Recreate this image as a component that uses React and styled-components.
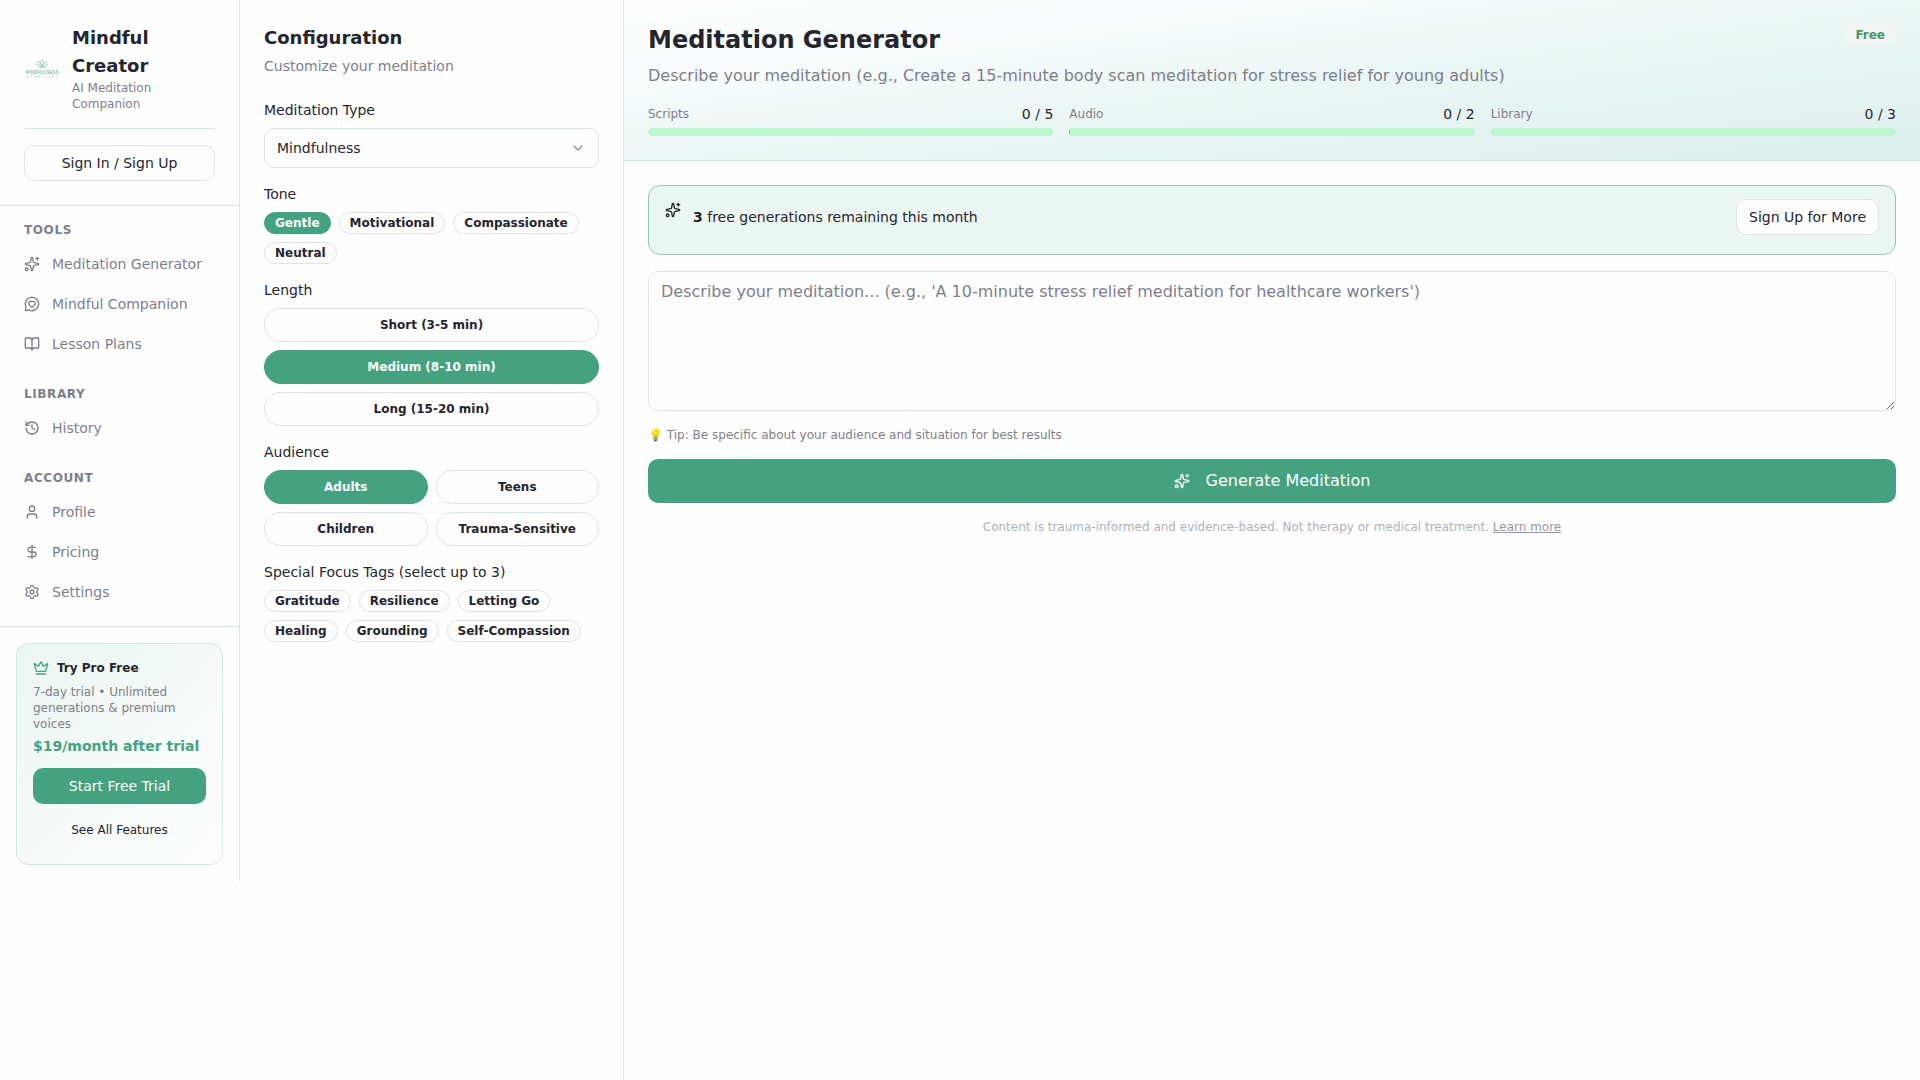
import React, { useState } from 'react'
import styled, { createGlobalStyle, css } from 'styled-components'
import {
  BookOpen,
  ChevronDown,
  Crown,
  DollarSign,
  History,
  MessageCircleHeart,
  Settings,
  Sparkles,
  User,
} from 'lucide-react'

const NAV = [
  {
    title: 'Tools',
    items: [
      { label: 'Meditation Generator', Icon: Sparkles },
      { label: 'Mindful Companion', Icon: MessageCircleHeart },
      { label: 'Lesson Plans', Icon: BookOpen },
    ],
  },
  { title: 'Library', items: [{ label: 'History', Icon: History }] },
  {
    title: 'Account',
    items: [
      { label: 'Profile', Icon: User },
      { label: 'Pricing', Icon: DollarSign },
      { label: 'Settings', Icon: Settings },
    ],
  },
]

const TONES = ['Gentle', 'Motivational', 'Compassionate', 'Neutral']
const LENGTHS = ['Short (3-5 min)', 'Medium (8-10 min)', 'Long (15-20 min)']
const AUDIENCES = ['Adults', 'Teens', 'Children', 'Trauma-Sensitive']
const TAGS = [
  'Gratitude',
  'Resilience',
  'Letting Go',
  'Healing',
  'Grounding',
  'Self-Compassion',
]
const USAGE = [
  { label: 'Scripts', used: 0, limit: 5 },
  { label: 'Audio', used: 0, limit: 2 },
  { label: 'Library', used: 0, limit: 3 },
]

function Logo() {
  return (
    <LogoMark viewBox="0 0 36 36" role="img" aria-label="Mindfulness Exercises">
      <g fill="none" stroke="#7fb398" strokeWidth="0.6">
        <path d="M18 9.500c-2 2.200-2 4.800 0 7c2-2.200 2-4.800 0-7z" />
        <path d="M18 16.500c-3-.4-4.400-2.300-4.300-4.800c2.400.5 3.900 2.200 4.300 4.800z" />
        <path d="M18 16.500c3-.4 4.400-2.300 4.300-4.800c-2.400.5-3.900 2.200-4.300 4.800z" />
        <path d="M12.300 14c.8 2.600 2.900 3.600 5.700 3.600s4.900-1 5.700-3.600" />
      </g>
      <text x="18" y="24" fontSize="4.6" textAnchor="middle" fill="#6aa688">
        MINDFULNESS
      </text>
      <text x="19" y="27.500" fontSize="2.600" textAnchor="middle" fill="#9cc4b0" letterSpacing="2">
        EXERCISES
      </text>
    </LogoMark>
  )
}

function Sidebar() {
  return (
    <SidebarPanel>
      <SidebarHeader>
        <Brand>
          <Logo />
          <div>
            <PanelTitle>Mindful Creator</PanelTitle>
            <SmallText>AI Meditation Companion</SmallText>
          </div>
        </Brand>
        <SignIn>
          <OutlineButton type="button">Sign In / Sign Up</OutlineButton>
        </SignIn>
      </SidebarHeader>
      <Nav>
        {NAV.map(({ title, items }) => (
          <section key={title}>
            <NavTitle>{title}</NavTitle>
            <NavList>
              {items.map(({ label, Icon }) => (
                <li key={label}>
                  <NavLink href="#">
                    <Icon size={16} />
                    {label}
                  </NavLink>
                </li>
              ))}
            </NavList>
          </section>
        ))}
      </Nav>
      <SidebarFooter>
        <TrialCard>
          <TrialTitle>
            <Crown size={16} color="#44a280" />
            Try Pro Free
          </TrialTitle>
          <SmallText>7-day trial • Unlimited generations &amp; premium voices</SmallText>
          <Price>$19/month after trial</Price>
          <PrimaryButton type="button">Start Free Trial</PrimaryButton>
          <GhostButton type="button">See All Features</GhostButton>
        </TrialCard>
      </SidebarFooter>
    </SidebarPanel>
  )
}

function Configuration() {
  const [tone, setTone] = useState('Gentle')
  const [length, setLength] = useState('Medium (8-10 min)')
  const [audience, setAudience] = useState('Adults')
  const [tags, setTags] = useState([])

  const toggleTag = (tag) => {
    if (tags.includes(tag)) {
      setTags(tags.filter((t) => t !== tag))
    } else if (tags.length < 3) {
      setTags([...tags, tag])
    }
  }

  return (
    <ConfigPanel>
      <div>
        <PanelTitle>Configuration</PanelTitle>
        <PanelSubtitle>Customize your meditation</PanelSubtitle>
      </div>
      <Fields>
        <Field>
          <Label as="label" htmlFor="meditation-type">
            Meditation Type
          </Label>
          <SelectBox>
            <Select id="meditation-type" defaultValue="Mindfulness">
              <option>Mindfulness</option>
              <option>Body Scan</option>
              <option>Loving-Kindness</option>
            </Select>
            <ChevronDown size={16} />
          </SelectBox>
        </Field>
        <Field role="group" aria-labelledby="tone-label">
          <Label id="tone-label">Tone</Label>
          <ChipRow>
            {TONES.map((t) => (
              <Chip key={t} type="button" $active={t === tone} aria-pressed={t === tone} onClick={() => setTone(t)}>
                {t}
              </Chip>
            ))}
          </ChipRow>
        </Field>
        <Field role="group" aria-labelledby="length-label">
          <Label id="length-label">Length</Label>
          <ChipGrid $columns={1}>
            {LENGTHS.map((l) => (
              <Chip key={l} type="button" $tall $active={l === length} aria-pressed={l === length} onClick={() => setLength(l)}>
                {l}
              </Chip>
            ))}
          </ChipGrid>
        </Field>
        <Field role="group" aria-labelledby="audience-label">
          <Label id="audience-label">Audience</Label>
          <ChipGrid $columns={2}>
            {AUDIENCES.map((a) => (
              <Chip key={a} type="button" $tall $active={a === audience} aria-pressed={a === audience} onClick={() => setAudience(a)}>
                {a}
              </Chip>
            ))}
          </ChipGrid>
        </Field>
        <Field role="group" aria-labelledby="tags-label">
          <Label id="tags-label">Special Focus Tags (select up to 3)</Label>
          <ChipRow>
            {TAGS.map((t) => (
              <Chip key={t} type="button" $active={tags.includes(t)} aria-pressed={tags.includes(t)} onClick={() => toggleTag(t)}>
                {t}
              </Chip>
            ))}
          </ChipRow>
        </Field>
      </Fields>
    </ConfigPanel>
  )
}

function Usage({ label, used, limit }) {
  return (
    <div>
      <UsageHead>
        <SmallText>{label}</SmallText>
        <UsageCount>
          {used} / {limit}
        </UsageCount>
      </UsageHead>
      <Track role="progressbar" aria-label={label} aria-valuenow={used} aria-valuemax={limit}>
        <Bar style={{ transform: `translateX(-${100 - (used / limit) * 100}%)` }} />
      </Track>
    </div>
  )
}

function Generator() {
  return (
    <Main>
      <Hero>
        <HeroTop>
          <div>
            <Title>Meditation Generator</Title>
            <Subtitle>
              Describe your meditation (e.g., Create a 15-minute body scan
              meditation for stress relief for young adults)
            </Subtitle>
          </div>
          <PlanBadge>Free</PlanBadge>
        </HeroTop>
        <UsageGrid>
          {USAGE.map((u) => (
            <Usage key={u.label} {...u} />
          ))}
        </UsageGrid>
      </Hero>
      <Content>
        <Notice>
          <Sparkles size={16} />
          <NoticeBody>
            <p>
              <strong>3</strong> free generations remaining this month
            </p>
            <OutlineButton type="button">Sign Up for More</OutlineButton>
          </NoticeBody>
        </Notice>
        <Prompt
          aria-label="Describe your meditation"
          placeholder="Describe your meditation... (e.g., 'A 10-minute stress relief meditation for healthcare workers')"
        />
        <SmallText>💡 Tip: Be specific about your audience and situation for best results</SmallText>
        <PrimaryButton type="button" $large>
          <Sparkles size={16} />
          Generate Meditation
        </PrimaryButton>
        <Disclaimer>
          Content is trauma-informed and evidence-based. Not therapy or medical
          treatment. <a href="#">Learn more</a>
        </Disclaimer>
      </Content>
    </Main>
  )
}

function App() {
  return (
    <>
      <GlobalStyle />
      <Page>
        <Sidebar />
        <Configuration />
        <Generator />
      </Page>
    </>
  )
}

export default App

const GlobalStyle = createGlobalStyle`
  *,
  *:before,
  *:after {
    box-sizing: border-box;
  }

  body {
    margin: 0;
    background: #fefefe;
    color: #25252d;
    font-family: 'DejaVu Sans', sans-serif;
    font-size: 14px;
    line-height: 20px;
  }

  h1,
  h2,
  h3,
  p,
  ul {
    margin: 0;
    padding: 0;
  }

  button,
  select,
  textarea {
    font: inherit;
    color: inherit;
  }

  svg {
    flex-shrink: 0;
  }
`

const Page = styled.div`
  display: grid;
  grid-template-columns: 240px 384px minmax(0, 1fr);
  min-height: 100vh;
`

const SidebarPanel = styled.aside`
  align-self: start;
  border-right: 1px solid #d9e6e2;
`

const SidebarHeader = styled.div`
  padding: 24px;
  border-bottom: 1px solid #d9e6e2;
`

const Brand = styled.div`
  display: flex;
  align-items: center;
  gap: 12px;
  padding-bottom: 16px;
`

const LogoMark = styled.svg`
  width: 36px;
  height: 36px;
  font-family: 'Liberation Sans', sans-serif;
`

const SignIn = styled.div`
  display: grid;
  padding-top: 16px;
  border-top: 1px solid #d5e8de;
`

const PanelTitle = styled.h2`
  font-size: 18px;
  font-weight: bold;
  line-height: 28px;
`

const PanelSubtitle = styled.p`
  margin-top: 4px;
  color: #7e7e8a;
`

const SmallText = styled.p`
  font-size: 12px;
  line-height: 16px;
  color: #7e7e8a;
`

const Nav = styled.nav`
  display: flex;
  flex-direction: column;
  gap: 24px;
  padding: 16px 24px;
`

const NavTitle = styled.h3`
  margin-bottom: 8px;
  font-size: 12px;
  font-weight: bold;
  line-height: 16px;
  letter-spacing: 0.05em;
  text-transform: uppercase;
  color: #7e7e8a;
`

const NavList = styled.ul`
  display: flex;
  flex-direction: column;
  gap: 4px;
  list-style: none;
`

const NavLink = styled.a`
  display: flex;
  align-items: center;
  gap: 12px;
  padding: 8px 0;
  color: #7e7e8a;
  text-decoration: none;
`

const SidebarFooter = styled.div`
  padding: 16px;
  border-top: 1px solid #d5e8de;
`

const TrialCard = styled.div`
  display: flex;
  flex-direction: column;
  padding: 16px;
  border: 1px solid #cfe7de;
  border-radius: 12px;
  background: linear-gradient(to bottom right, #ebf5f2, #fefefe);
`

const TrialTitle = styled.h3`
  display: flex;
  align-items: center;
  gap: 8px;
  margin-bottom: 8px;
  font-size: 12px;
  line-height: 16px;
`

const Price = styled.p`
  margin: 4px 0 12px;
  font-weight: bold;
  color: #44a280;
`

const buttonBase = css`
  display: flex;
  align-items: center;
  justify-content: center;
  height: 36px;
  padding: 0 12px;
  border: 1px solid transparent;
  border-radius: 10px;
  cursor: pointer;
`

const OutlineButton = styled.button`
  ${buttonBase}
  border-color: #d9e6e2;
  background: #fefefe;
`

const PrimaryButton = styled.button`
  ${buttonBase}
  border: none;
  background: #44a280;
  color: #fefefe;

  ${({ $large }) =>
    $large &&
    css`
      gap: 16px;
      height: 44px;
      font-size: 16px;
      line-height: 24px;
    `}
`

const GhostButton = styled.button`
  ${buttonBase}
  margin-top: 8px;
  background: none;
  font-size: 12px;
`

const ConfigPanel = styled.section`
  display: flex;
  flex-direction: column;
  gap: 24px;
  padding: 24px;
  border-right: 1px solid #d9e6e2;
`

const Fields = styled.div`
  display: flex;
  flex-direction: column;
  gap: 16px;
`

const Field = styled.div`
  display: flex;
  flex-direction: column;
  gap: 8px;
`

const Label = styled.span`
  display: block;
`

const SelectBox = styled.div`
  display: grid;
  align-items: center;

  > * {
    grid-area: 1 / 1;
  }

  svg {
    justify-self: end;
    margin-right: 13px;
    opacity: 0.5;
    pointer-events: none;
  }
`

const Select = styled.select`
  appearance: none;
  width: 100%;
  height: 40px;
  padding: 0 12px;
  border: 1px solid #d9e6e2;
  border-radius: 10px;
  background: #fefefe;
`

const ChipRow = styled.div`
  display: flex;
  flex-wrap: wrap;
  gap: 8px;
`

const ChipGrid = styled.div`
  display: grid;
  grid-template-columns: repeat(${({ $columns }) => $columns}, 1fr);
  gap: 8px;
`

const Chip = styled.button`
  padding: ${({ $tall }) => ($tall ? '8px 10px' : '2px 10px')};
  border: 1px solid ${({ $active }) => ($active ? '#44a280' : '#d9e6e2')};
  border-radius: 999px;
  background: ${({ $active }) => ($active ? '#44a280' : '#fefefe')};
  color: ${({ $active }) => ($active ? '#fefefe' : '#25252d')};
  font-size: 12px;
  font-weight: bold;
  line-height: 16px;
  cursor: pointer;
`

const Main = styled.main`
  min-width: 0;
`

const Hero = styled.header`
  padding: 24px;
  border-bottom: 1px solid #d5e8de;
  background: linear-gradient(to bottom right, #fefefe, #f8fcfc 25%, #ecf6f4 50%, #dcf0ed);
`

const HeroTop = styled.div`
  display: flex;
  align-items: flex-start;
  justify-content: space-between;
  gap: 16px;
`

const Title = styled.h1`
  font-size: 24px;
  font-weight: bold;
  line-height: 32px;
`

const Subtitle = styled.p`
  margin-top: 8px;
  font-size: 16px;
  line-height: 24px;
  color: #7e7e8a;
`

const PlanBadge = styled.span`
  padding: 3px 11px;
  border-radius: 999px;
  background: #f0f5f3;
  color: #4a9468;
  font-size: 12px;
  font-weight: bold;
  line-height: 16px;
`

const UsageGrid = styled.div`
  display: grid;
  grid-template-columns: repeat(3, 1fr);
  gap: 16px;
  margin-top: 16px;
`

const UsageHead = styled.div`
  display: flex;
  align-items: center;
  justify-content: space-between;
  margin-bottom: 4px;
`

const UsageCount = styled.span`
  line-height: 20px;
`

const Track = styled.div`
  height: 8px;
  border-radius: 999px;
  background: #bbf7d0;
  overflow: hidden;
`

const Bar = styled.div`
  width: 100%;
  height: 100%;
  background: #44a280;
`

const Content = styled.div`
  display: flex;
  flex-direction: column;
  gap: 16px;
  padding: 24px;
`

const Notice = styled.div`
  display: flex;
  align-items: flex-start;
  gap: 12px;
  padding: 16px;
  border: 1px solid #8fcab5;
  border-radius: 12px;
  background: #ebf5f2;
`

const NoticeBody = styled.div`
  display: flex;
  flex: 1;
  align-items: center;
  justify-content: space-between;
  gap: 16px;
  margin: -3px 0 3px;
`

const Prompt = styled.textarea`
  display: block;
  width: 100%;
  height: 140px;
  padding: 8px 12px;
  border: 1px solid #d9e6e2;
  border-radius: 10px;
  background: #fefefe;
  font-size: 16px;
  line-height: 24px;
  resize: vertical;

  &::placeholder {
    color: #7e7e8a;
  }
`

const Disclaimer = styled.p`
  font-size: 12px;
  line-height: 16px;
  text-align: center;
  color: #b1b1b8;

  a {
    color: #9797a1;
  }
`
